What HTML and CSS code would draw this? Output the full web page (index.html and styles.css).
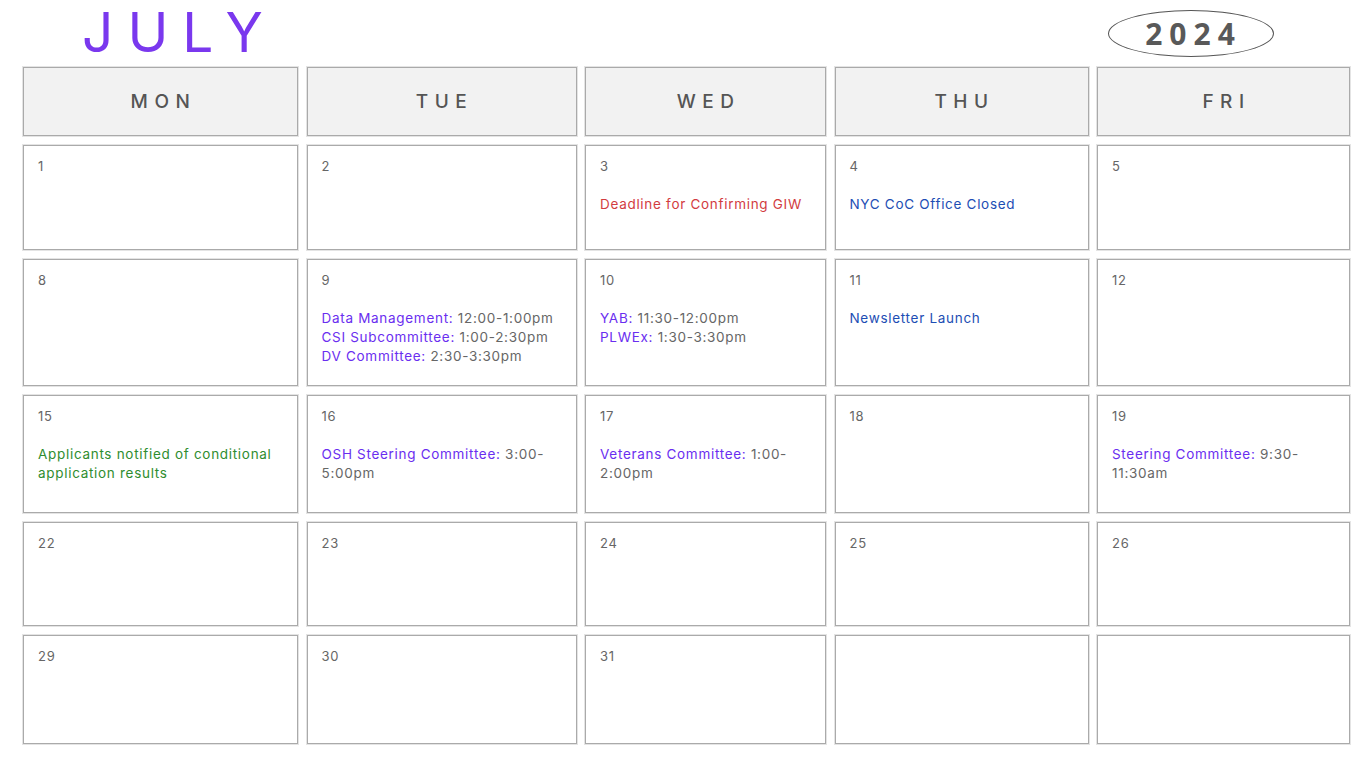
FILE: index.html
```html
<!DOCTYPE html>
<html lang="en">
<head>
<meta charset="utf-8">
<title>July 2024</title>
<link rel="stylesheet" href="styles.css">
</head>
<body>
<div class="page">
  <header class="top">
    <h1 class="month">JULY</h1>
    <div class="year">2024</div>
  </header>
  <div class="cal">
    <div class="dow">MON</div>
    <div class="dow">TUE</div>
    <div class="dow">WED</div>
    <div class="dow">THU</div>
    <div class="dow">FRI</div>

    <div class="day"><div class="num">1</div></div>
    <div class="day"><div class="num">2</div></div>
    <div class="day"><div class="num">3</div><div class="ev red">Deadline for Confirming GIW</div></div>
    <div class="day"><div class="num">4</div><div class="ev blue">NYC CoC Office Closed</div></div>
    <div class="day"><div class="num">5</div></div>

    <div class="day"><div class="num">8</div></div>
    <div class="day"><div class="num">9</div><div class="ev"><span class="lbl">Data Management:</span> 12:00-1:00pm<br><span class="lbl">CSI Subcommittee:</span> 1:00-2:30pm<br><span class="lbl">DV Committee:</span> 2:30-3:30pm</div></div>
    <div class="day"><div class="num">10</div><div class="ev"><span class="lbl">YAB:</span> 11:30-12:00pm<br><span class="lbl">PLWEx:</span> 1:30-3:30pm</div></div>
    <div class="day"><div class="num">11</div><div class="ev blue">Newsletter Launch</div></div>
    <div class="day"><div class="num">12</div></div>

    <div class="day"><div class="num">15</div><div class="ev green">Applicants notified of conditional application results</div></div>
    <div class="day"><div class="num">16</div><div class="ev"><span class="lbl">OSH Steering Committee:</span> 3:00-5:00pm</div></div>
    <div class="day"><div class="num">17</div><div class="ev"><span class="lbl">Veterans Committee:</span> 1:00-2:00pm</div></div>
    <div class="day"><div class="num">18</div></div>
    <div class="day"><div class="num">19</div><div class="ev"><span class="lbl">Steering Committee:</span> 9:30-11:30am</div></div>

    <div class="day"><div class="num">22</div></div>
    <div class="day"><div class="num">23</div></div>
    <div class="day"><div class="num">24</div></div>
    <div class="day"><div class="num">25</div></div>
    <div class="day"><div class="num">26</div></div>

    <div class="day"><div class="num">29</div></div>
    <div class="day"><div class="num">30</div></div>
    <div class="day"><div class="num">31</div></div>
    <div class="day"></div>
    <div class="day"></div>
  </div>
</div>
</body>
</html>
```
FILE: styles.css
```css
html, body {
  margin: 0;
  padding: 0;
  background: #ffffff;
}
body {
  font-family: "Inter", "Open Sans", "Liberation Sans", sans-serif;
  color: #666666;
}
.page {
  width: 1366px;
  height: 768px;
  box-sizing: border-box;
  padding: 0 15px 0 23px;
}
.top {
  height: 67px;
  display: flex;
  align-items: flex-start;
  justify-content: space-between;
}
.month {
  margin: 0;
  margin-left: 59px;
  font-family: "Inter", "Open Sans", sans-serif;
  font-weight: 400;
  font-size: 55px;
  line-height: 64px;
  letter-spacing: 14px;
  color: #7a38ee;
}
.year {
  margin-top: 10px;
  margin-right: 77px;
  width: 159px;
  height: 45px;
  padding-left: 5px;
  border: 1px solid #555555;
  border-radius: 50%;
  display: flex;
  align-items: center;
  justify-content: center;
  font-family: "Open Sans", sans-serif;
  font-weight: 700;
  font-size: 30px;
  letter-spacing: 7px;
  color: #595959;
}
.cal {
  display: grid;
  grid-template-columns: 275px 270px 241px 254px 253px;
  grid-template-rows: 69px 105px 127px 118px 104px 109px;
  column-gap: 8.5px;
  row-gap: 9px;
}
.dow, .day {
  box-sizing: border-box;
  border: 1px solid #aaaaaa;
  box-shadow: 0 0 0 1px #e4e4e4;
}
.dow {
  background: #f2f2f2;
  display: flex;
  align-items: center;
  justify-content: center;
  font-weight: 500;
  font-size: 19px;
  letter-spacing: 6.5px;
  padding-left: 6px;
  color: #555555;
}
.day {
  background: #ffffff;
  padding: 11px 14px 0 14px;
  font-size: 13.5px;
  line-height: 19px;
  letter-spacing: 0.7px;
}
.num {
  color: #666666;
  font-size: 13px;
}
.ev {
  margin-top: 19px;
  color: #666666;
}
.lbl {
  color: #6a2ef0;
}
.red { color: #d23c3f; }
.blue { color: #1d4eb4; }
.green { color: #2f8d2f; }
```
